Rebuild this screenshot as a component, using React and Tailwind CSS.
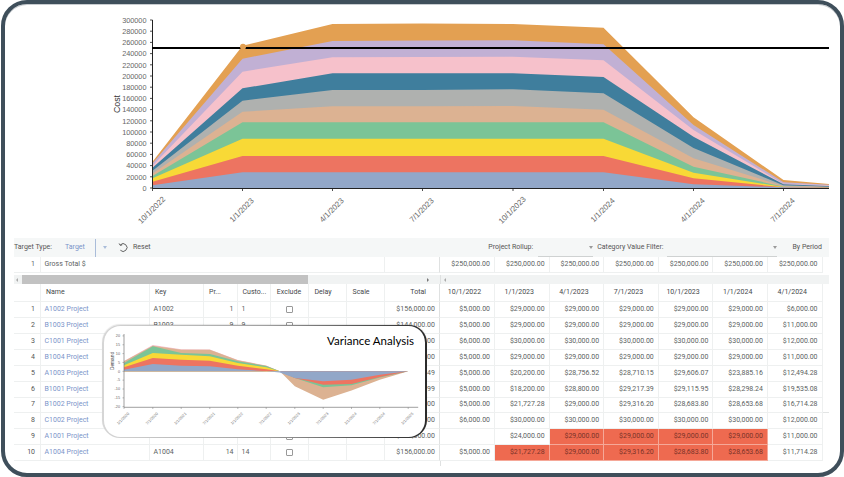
import React from "react";

// chart band tops in page pixels, top band first
const ticksX = [152.5, 242.5, 332.5, 422.5, 513, 603.5, 693.5, 783.5, 829];
const bands = [
  { color: "#E3A052", line: [161.7, 45.7, 24, 23.5, 24, 27.7, 117.3, 180, 184] },
  { color: "#C1B0D4", line: [163.3, 58.7, 41, 40.5, 40.3, 44.3, 125, 182.3, 184.7] },
  { color: "#F6C1CB", line: [165.7, 71.7, 57.3, 57, 56.7, 60.3, 130, 184, 185.3] },
  { color: "#3F7E9D", line: [167.7, 88.3, 73.3, 73.3, 73.3, 77, 136.7, 184.3, 186] },
  { color: "#AFB1AF", line: [170.7, 100.7, 90, 90, 89.3, 93.3, 148, 185.3, 186.7] },
  { color: "#DCB292", line: [173.5, 111.7, 106.3, 106.3, 106, 109.7, 158.3, 186, 187] },
  { color: "#7BC497", line: [176, 122.3, 122.3, 122.3, 122.3, 122.3, 166.7, 186.7, 187.3] },
  { color: "#F8D936", line: [178.3, 138.7, 138.7, 138.7, 138.7, 138.7, 172.7, 187, 187.5] },
  { color: "#ED7461", line: [181.7, 156, 156, 156, 156, 156, 178.3, 187.3, 187.6] },
  { color: "#92A7C8", line: [185.3, 172.3, 172.3, 172.3, 172.3, 172.3, 184.3, 187.3, 187.7] },
];
const yLabels = Array.from({ length: 16 }, (_, i) => i * 20000);
const xLabels = ["10/1/2022", "1/1/2023", "4/1/2023", "7/1/2023", "10/1/2023", "1/1/2024", "4/1/2024", "7/1/2024"];

function CostChart() {
  return (
    <svg viewBox="5 4 835 234" className="block w-[835px] h-[234px]" fontFamily="Liberation Sans, sans-serif">
      {bands.map((b) => (
        <polygon
          key={b.color}
          fill={b.color}
          points={`152.5,188 ${b.line.map((y, i) => `${ticksX[i]},${y}`).join(" ")} 829,188`}
        />
      ))}
      <path d="M152.5 20V188.5H829" fill="none" stroke="#222" strokeWidth="1" />
      {yLabels.map((v) => {
        const y = 188 - v * 0.00056;
        return (
          <g key={v}>
            <path d={`M150 ${y}H152.5`} stroke="#222" strokeWidth="0.8" />
            <text x="146.5" y={y + 2.8} textAnchor="end" fontSize="7.3" fill="#666">{v}</text>
          </g>
        );
      })}
      {xLabels.map((l, i) => (
        <g key={l}>
          <path d={`M${ticksX[i]} 188V191`} stroke="#222" strokeWidth="0.8" />
          <text
            transform={`translate(${ticksX[i] + 1} 212) rotate(-45)`}
            textAnchor="middle"
            fontSize="7.8"
            fill="#666"
          >
            {l}
          </text>
        </g>
      ))}
      <text transform="translate(119.5 104) rotate(-90)" textAnchor="middle" fontSize="8.8" fill="#333">Cost</text>
      <path d="M152 48H829" stroke="#000" strokeWidth="2" />
      <circle cx="243" cy="46.7" r="3" fill="#E3A052" />
    </svg>
  );
}

// variance chart, page pixels again
const vZero = 371.3;
const vTickX = [123.5, 152.3, 180.7, 209.3, 237.3, 265.7, 294.3, 322.7, 351, 379.3, 407.7];
const posX = [123.5, 152.3, 180.7, 209.3, 237.3, 265.7, 279.3];
const vPos = [
  { color: "#F6C1CB", line: [361, 345, 349.3, 349.5, 360, 365.5, vZero] },
  { color: "#DCB292", line: [361.3, 345.7, 349.7, 349.7, 360.3, 365.7, vZero] },
  { color: "#7BC497", line: [363, 346.3, 353, 354, 361.3, 366, vZero] },
  { color: "#F8D936", line: [365.3, 353, 354.7, 356.3, 363, 367.3, vZero] },
  { color: "#ED7461", line: [367.3, 358, 359.7, 360.7, 365.7, 369.3, vZero] },
  { color: "#92A7C8", line: [369.7, 364, 365.7, 366.3, 369.3, vZero, vZero] },
];
const negX = [265.7, 279.3, 294.3, 322.7, 351, 379.3, 407.7, 417.7];
const vNeg = [
  { color: "#DCB292", line: [vZero, vZero, 386.3, 399.7, 390.5, 379.7, vZero, vZero] },
  { color: "#7BC497", line: [vZero, vZero, 378, 387.3, 385.3, 377.5, vZero, vZero] },
  { color: "#ED7461", line: [vZero, vZero, 378, 384.7, 384, 377, vZero, vZero] },
  { color: "#92A7C8", line: [vZero, 372.5, 378, 381.3, 379.7, 374.7, vZero, vZero] },
];
const vTicks = [20, 15, 10, 5, 0, -5, -10, -15, -20];
const vDates = ["1/1/2020", "7/1/2020", "1/1/2021", "7/1/2021", "1/1/2022", "7/1/2022", "1/1/2023", "7/1/2023", "1/1/2024", "7/1/2024", "1/1/2025"];

const areaPoints = (xs, line) =>
  `${xs[0]},${vZero} ${line.map((y, i) => `${xs[i]},${y}`).join(" ")} ${xs[xs.length - 1]},${vZero}`;

function VarianceChart() {
  return (
    <svg viewBox="103.5 326 321.5 110.5" className="block w-[321.5px] h-[110.5px]" fontFamily="Liberation Sans, sans-serif">
      {vPos.map((b) => (
        <polygon key={b.color} fill={b.color} points={areaPoints(posX, b.line)} />
      ))}
      {vNeg.map((b) => (
        <polygon key={b.color} fill={b.color} points={areaPoints(negX, b.line)} />
      ))}
      <path d="M123.5 334V407.3H417.7" fill="none" stroke="#777" strokeWidth="0.7" />
      {vTicks.map((t) => {
        const y = vZero - t * 1.77;
        return (
          <g key={t}>
            <path d={`M122 ${y}H123.5`} stroke="#777" strokeWidth="0.5" />
            <text x="119.6" y={y + 1.3} textAnchor="end" fontSize="3.8" fill="#666">{t}</text>
          </g>
        );
      })}
      {vDates.map((d, i) => (
        <g key={d}>
          <path d={`M${vTickX[i]} 407.3V409`} stroke="#777" strokeWidth="0.5" />
          <text transform={`translate(${vTickX[i]} 419.5) rotate(-45)`} textAnchor="middle" fontSize="4" fill="#777">{d}</text>
        </g>
      ))}
      <text transform="translate(113.4 361) rotate(-90)" textAnchor="middle" fontSize="4.8" fill="#444">Demand</text>
    </svg>
  );
}

const gridCols =
  "grid grid-cols-[27px_109px_54px_33.5px_33px_38px_38px_38px_55.5px_55px_54.6px_54.6px_54.6px_54.6px_54.6px_54.6px]";
const cell = "flex items-center border-r border-b border-[#eef0f0] min-w-0 overflow-hidden whitespace-nowrap";
const money = `${cell} justify-end pr-1`;

const rows = [
  ["A1002 Project", "A1002", 1, 1, "$156,000.00", ["$5,000.00", "$29,000.00", "$29,000.00", "$29,000.00", "$29,000.00", "$29,000.00", "$6,000.00"]],
  ["B1003 Project", "B1003", 9, 9, "$144,000.00", ["$5,000.00", "$29,000.00", "$29,000.00", "$29,000.00", "$29,000.00", "$29,000.00", "$11,000.00"]],
  ["C1001 Project", "C1001", 8, 8, "$156,000.00", ["$6,000.00", "$30,000.00", "$30,000.00", "$30,000.00", "$30,000.00", "$30,000.00", "$12,000.00"]],
  ["B1004 Project", "B1004", 7, 7, "$156,000.00", ["$5,000.00", "$29,000.00", "$29,000.00", "$29,000.00", "$29,000.00", "$29,000.00", "$11,000.00"]],
  ["A1003 Project", "A1003", 6, 6, "$150,652.49", ["$5,000.00", "$20,200.00", "$28,756.52", "$28,710.15", "$29,606.07", "$23,885.16", "$12,494.28"]],
  ["B1001 Project", "B1001", 5, 5, "$156,166.99", ["$5,000.00", "$18,200.00", "$28,800.00", "$29,217.39", "$29,115.95", "$28,298.24", "$19,535.08"]],
  ["B1002 Project", "B1002", 4, 4, "$156,000.00", ["$5,000.00", "$21,727.28", "$29,000.00", "$29,316.20", "$28,683.80", "$28,653.68", "$16,714.28"]],
  ["C1002 Project", "C1002", 3, 3, "$156,000.00", ["$6,000.00", "$30,000.00", "$30,000.00", "$30,000.00", "$30,000.00", "$30,000.00", "$12,000.00"]],
  ["A1001 Project", "A1001", 12, 12, "$142,000.00", ["", "$24,000.00", "$29,000.00", "$29,000.00", "$29,000.00", "$29,000.00", "$11,000.00"], [2, 3, 4, 5]],
  ["A1004 Project", "A1004", 14, 14, "$156,000.00", ["$5,000.00", "$21,727.28", "$29,000.00", "$29,316.20", "$28,683.80", "$28,653.68", "$11,714.28"], [1, 2, 3, 4, 5]],
];

function DataRow({ row, index }) {
  const [name, key, pr, custom, total, values, hot = []] = row;
  return (
    <div className={`${gridCols} h-[15.9px] ${index === 7 ? "shadow-[0_-1px_0_#e2e4e4]" : ""}`}>
      <div className={`${cell} justify-end pr-[5px] text-[#555]`}>{index + 1}</div>
      <div className={`${cell} pl-[3.5px] text-[#7b94c9]`}>{name}</div>
      <div className={`${cell} pl-[3.5px]`}>{key}</div>
      <div className={`${cell} justify-end pr-[3px]`}>{pr}</div>
      <div className={`${cell} pl-1`}>{custom}</div>
      <div className={`${cell} justify-center`}>
        <span className="w-[7px] h-[7px] border border-[#999] rounded-[1px] bg-white" />
      </div>
      <div className={cell} />
      <div className={cell} />
      <div className={`${money} border-r-[#dfe1e1]`}>{total}</div>
      {values.map((v, i) => (
        <div
          key={i}
          className={`${money} ${hot.includes(i) ? "bg-[#ee6a50] text-[#7a3328] border-[#f5a898]" : ""}`}
        >
          {v}
        </div>
      ))}
    </div>
  );
}

const headers = ["10/1/2022", "1/1/2023", "4/1/2023", "7/1/2023", "10/1/2023", "1/1/2024", "4/1/2024"];

function Grid() {
  return (
    <div className="ml-[9px] w-[815px] text-[7px] leading-none text-[#5c5f62] font-['Roboto',sans-serif] relative">
      <div className="h-[19px] bg-[#f5f7f7] flex items-center text-[#555]">
        <span className="w-[51px]">Target Type:</span>
        <span className="w-[30px] text-[#7b94c9]">Target</span>
        <span className="w-px h-[18px] bg-[#a9bcd9]" />
        <span className="ml-[7px] w-0 h-0 border-x-[2.5px] border-x-transparent border-t-[3px] border-t-[#a9bcd9]" />
        <svg viewBox="0 0 12 12" className="ml-[11px] w-[11px] h-[11px]" fill="none" stroke="#444" strokeWidth="0.9">
          <path d="M2.5 3.2A4.2 4.2 0 1 1 2.6 9" />
          <path d="M1.2 1.6L2.4 3.6L4.6 3.2" />
        </svg>
        <span className="ml-1">Reset</span>
        <span className="ml-auto">Project Rollup:</span>
        <span className="ml-[5px] w-[55px] h-[18px] border-b border-[#cfd2d2] flex items-center justify-end pt-[1px]">
          <span className="w-0 h-0 border-x-[2.5px] border-x-transparent border-t-[3px] border-t-[#9a9a9a]" />
        </span>
        <span className="ml-1">Category Value Filter:</span>
        <span className="ml-1 w-[110px] h-[18px] border-b border-[#cfd2d2] flex items-center justify-end pt-[1px]">
          <span className="w-0 h-0 border-x-[2.5px] border-x-transparent border-t-[3px] border-t-[#9a9a9a]" />
        </span>
        <span className="ml-[15px] mr-[7px]">By Period</span>
      </div>
      <div className={`${gridCols} h-[16px]`}>
        <div className={`${cell} justify-end pr-[5px]`}>1</div>
        <div className={`${cell} pl-[3.5px] col-span-7`}>Gross Total $</div>
        <div className={`${cell} border-r-[#dfe1e1]`} />
        {Array.from({ length: 7 }, (_, i) => (
          <div key={i} className={money}>$250,000.00</div>
        ))}
      </div>
      <div className="flex h-[9px] mt-[2px]">
        <div className="w-[426px] bg-[#f1f3f3] flex items-center relative">
          <span className="ml-[2px] w-0 h-0 border-y-[2px] border-y-transparent border-r-[2.5px] border-r-[#aaa]" />
          <span className="ml-[4px] w-[286px] h-full bg-[#c2c2c2]" />
          <span className="ml-auto mr-[11px] w-0 h-0 border-y-[2px] border-y-transparent border-l-[2.5px] border-l-[#777]" />
        </div>
        <div className="w-[389px] bg-[#f1f3f3] flex items-center border-l border-[#dfe1e1]">
          <span className="ml-[3px] w-0 h-0 border-y-[2px] border-y-transparent border-r-[2.5px] border-r-[#aaa]" />
        </div>
      </div>
      <div className={`${gridCols} h-[18.2px] text-[#45484b]`}>
        <div className={cell} />
        <div className={`${cell} pl-[5px]`}>Name</div>
        <div className={`${cell} pl-[5px]`}>Key</div>
        <div className={`${cell} pl-[5px]`}>Pr...</div>
        <div className={`${cell} pl-[5px]`}>Custo...</div>
        <div className={`${cell} justify-center`}>Exclude</div>
        <div className={`${cell} pl-[6px]`}>Delay</div>
        <div className={`${cell} pl-[6px]`}>Scale</div>
        <div className={`${cell} justify-end pr-[13px] border-r-[#dfe1e1]`}>Total</div>
        {headers.map((h) => (
          <div key={h} className={`${cell} justify-center pr-[5px]`}>{h}</div>
        ))}
      </div>
      {rows.map((r, i) => (
        <DataRow key={r[0]} row={r} index={i} />
      ))}
      <div className="ml-[425.5px] h-[5px] w-px bg-[#dfe1e1]" />
      <div className="absolute left-[88px] top-[86.5px] w-[324.5px] h-[113.5px] p-[1.5px] rounded-[18px] bg-gradient-to-r from-[#d6d6d6] via-[#a0a0a0] to-[#2a2a2a] shadow-[0_-1px_1px_rgba(0,0,0,0.1)]">
        <div className="relative w-full h-full rounded-[16.5px] bg-white overflow-hidden">
          <VarianceChart />
          <span className="absolute right-[11px] top-[7px] text-[11.5px] leading-[16px] text-black font-['Lato',sans-serif]">Variance Analysis</span>
        </div>
      </div>
    </div>
  );
}

export default function App() {
  return (
    <div className="w-[844px] h-[477px] bg-white overflow-hidden pl-px">
      <div className="h-full border-[4px] border-[#3f4f5b] rounded-[26px] overflow-hidden shadow-[inset_0_1px_0_#c8ccd0]">
        <CostChart />
        <Grid />
      </div>
    </div>
  );
}
